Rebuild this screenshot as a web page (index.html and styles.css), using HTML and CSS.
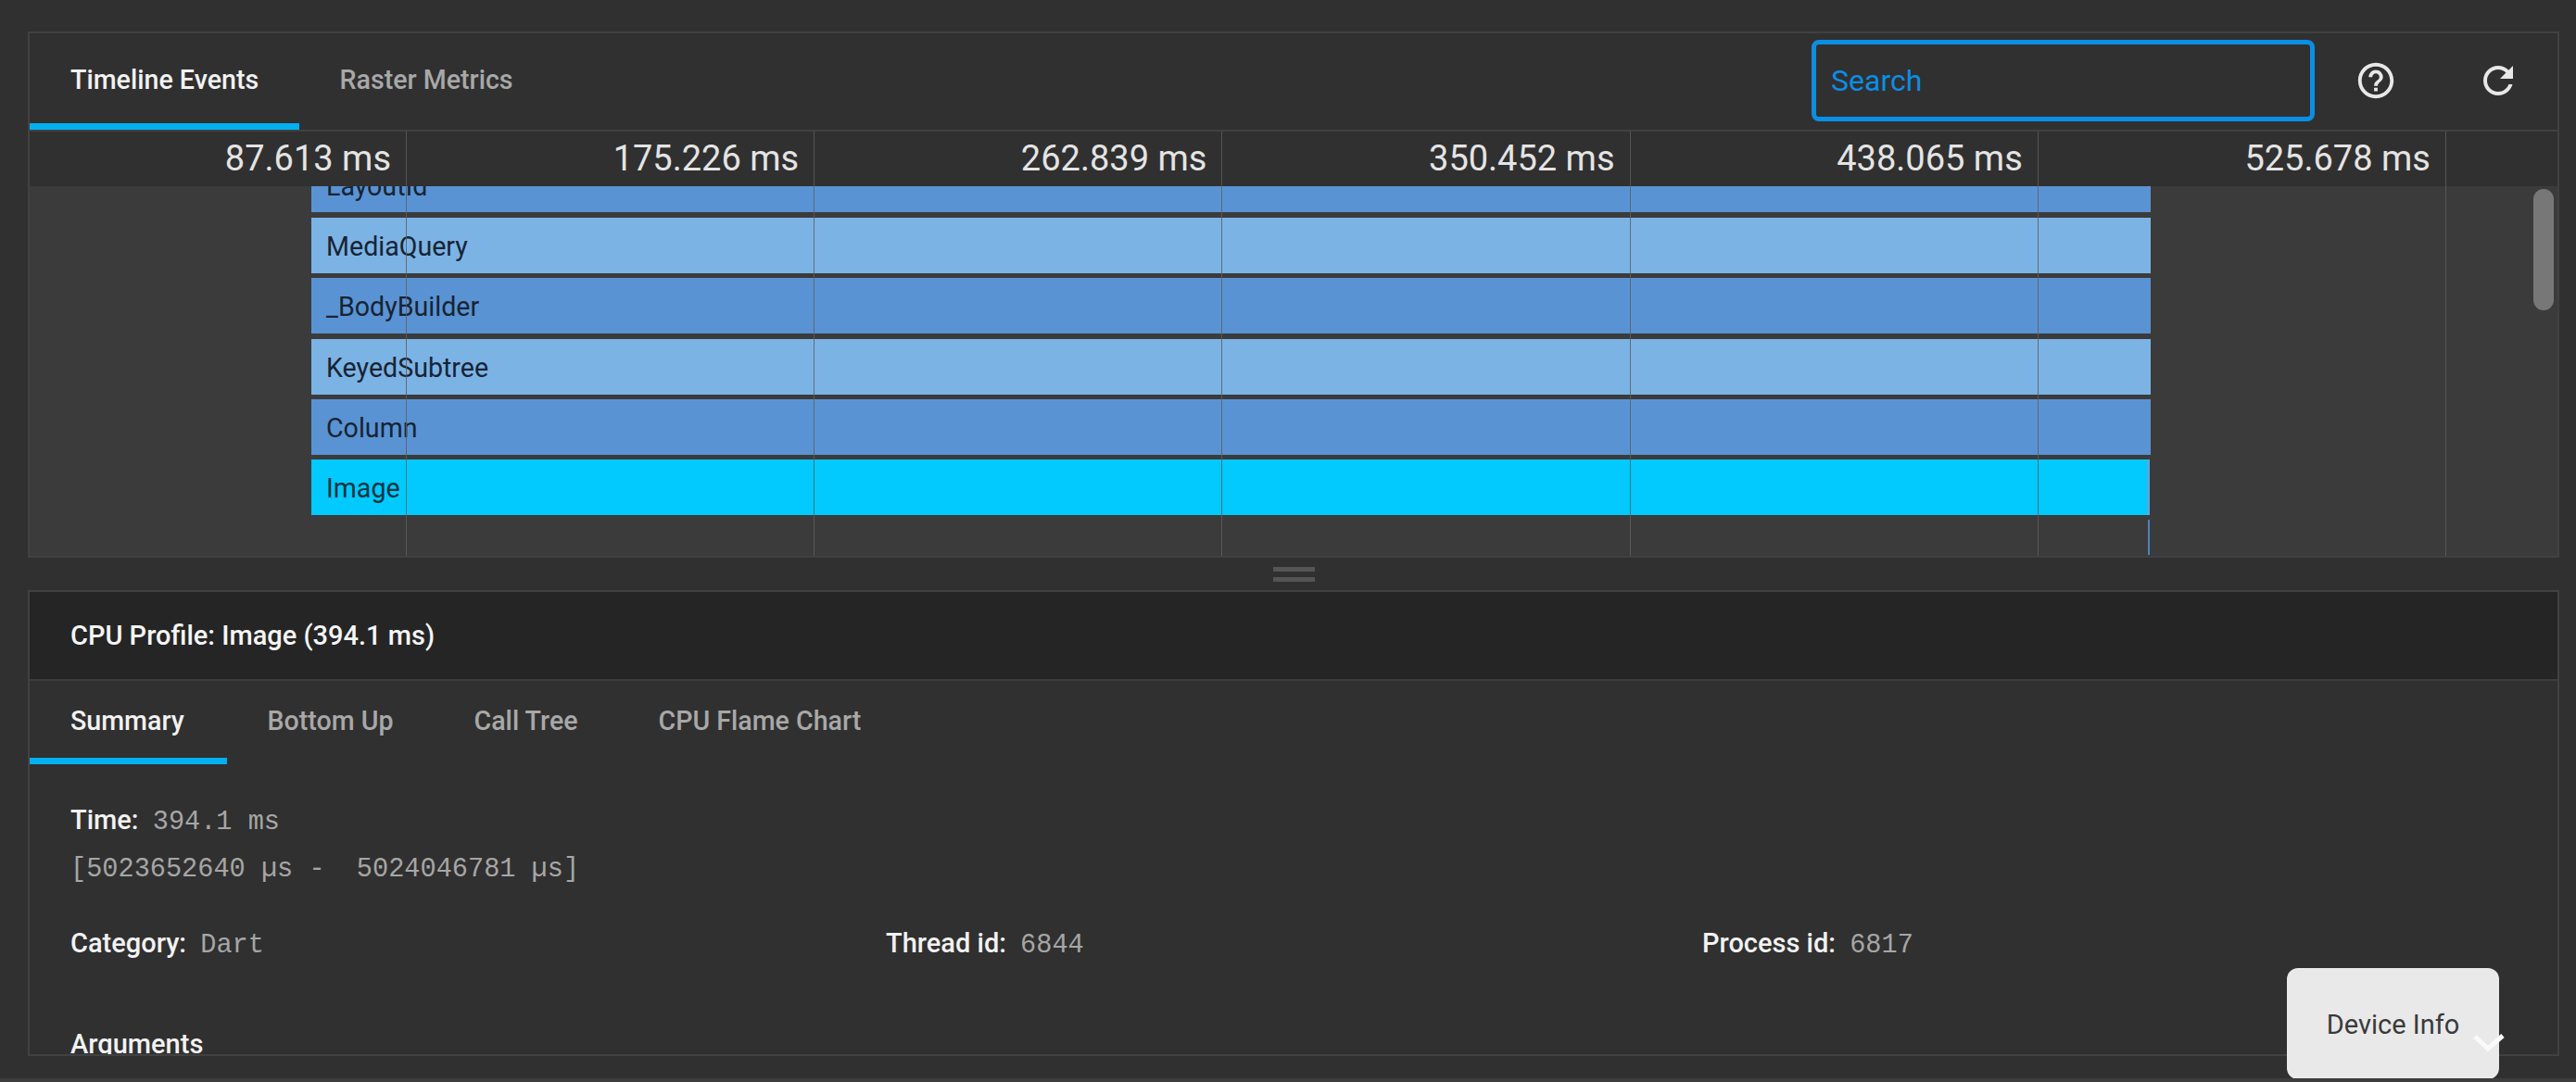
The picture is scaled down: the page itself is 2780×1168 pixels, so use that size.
FILE: index.html
```html
<!DOCTYPE html>
<html>
  <head>
    <link rel="stylesheet" href="styles.css">
    <title>Timeline Events</title>
  </head>
  <body>
    <div class="panel timeline-panel">
      <div class="toolbar">
        <div class="tab-bar">
          <div class="tab tab-active tab-timeline">Timeline Events</div>
          <div class="tab tab-raster">Raster Metrics</div>
        </div>
        <div class="search-box">Search</div>
        <div class="icon-btn icon-help">
          <svg width="46" height="46" viewBox="0 0 24 24"><path fill="#e8e8e8" d="M11 18h2v-2h-2v2zm1-16C6.48 2 2 6.48 2 12s4.48 10 10 10 10-4.48 10-10S17.52 2 12 2zm0 18c-4.41 0-8-3.59-8-8s3.59-8 8-8 8 3.59 8 8-3.59 8-8 8zm0-14c-2.21 0-4 1.79-4 4h2c0-1.1.9-2 2-2s2 .9 2 2c0 2-3 1.75-3 5h2c0-2.25 3-2.5 3-5 0-2.21-1.79-4-4-4z"/></svg>
        </div>
        <div class="icon-btn icon-refresh">
          <svg width="48" height="48" viewBox="0 0 24 24"><path fill="#e8e8e8" d="M17.65 6.35C16.2 4.9 14.21 4 12 4c-4.42 0-7.99 3.58-7.99 8s3.57 8 7.99 8c3.73 0 6.84-2.55 7.73-6h-2.08c-.82 2.33-3.04 4-5.65 4-3.31 0-6-2.69-6-6s2.69-6 6-6c1.66 0 3.14.69 4.22 1.78L13 11h7V4l-2.35 2.35z"/></svg>
        </div>
      </div>
      <div class="ruler">
        <div class="ruler-cell">87.613 ms</div>
        <div class="ruler-cell">175.226 ms</div>
        <div class="ruler-cell">262.839 ms</div>
        <div class="ruler-cell">350.452 ms</div>
        <div class="ruler-cell">438.065 ms</div>
        <div class="ruler-cell">525.678 ms</div>
      </div>
      <div class="chart">
        <div class="bar bar-dark bar-first"><span>LayoutId</span></div>
        <div class="bar bar-light"><span>MediaQuery</span></div>
        <div class="bar bar-dark"><span>_BodyBuilder</span></div>
        <div class="bar bar-light"><span>KeyedSubtree</span></div>
        <div class="bar bar-dark"><span>Column</span></div>
        <div class="bar bar-selected"><span>Image</span></div>
        <div class="bar-tail"></div>
        <div class="grid-lines">
          <div class="grid-line"></div>
          <div class="grid-line"></div>
          <div class="grid-line"></div>
          <div class="grid-line"></div>
          <div class="grid-line"></div>
          <div class="grid-line"></div>
        </div>
        <div class="scroll-thumb"></div>
      </div>
    </div>

    <div class="drag-handle"><span></span><span></span></div>

    <div class="panel details-panel">
      <div class="details-title">CPU Profile: Image (394.1 ms)</div>
      <div class="tab-bar details-tabs">
        <div class="tab tab-active tab-summary">Summary</div>
        <div class="tab tab-bottom">Bottom Up</div>
        <div class="tab tab-call">Call Tree</div>
        <div class="tab tab-flame">CPU Flame Chart</div>
      </div>
      <div class="summary">
        <div class="summary-line"><b>Time:</b> <span class="mono">394.1 ms</span></div>
        <div class="summary-line range"><span class="mono">[5023652640 µs -&nbsp; 5024046781 µs]</span></div>
        <div class="summary-row">
          <div class="summary-line col-category"><b>Category:</b> <span class="mono">Dart</span></div>
          <div class="summary-line col-thread"><b>Thread id:</b> <span class="mono">6844</span></div>
          <div class="summary-line"><b>Process id:</b> <span class="mono">6817</span></div>
        </div>
        <div class="summary-line arguments"><b>Arguments</b></div>
      </div>
    </div>

    <div class="device-info">
      Device Info
      <svg class="device-chevron" width="36" height="22" viewBox="0 0 36 22"><path fill="none" stroke="#fafafa" stroke-width="5" d="M3 4l14 13L33 3"/></svg>
    </div>
  </body>
</html>
```

FILE: styles.css
```css
* {
  box-sizing: border-box;
}
html,
body {
  height: 100%;
}
body {
  margin: 0;
  padding: 34px 18px 0 30px;
  background-color: #303030;
  border-bottom: 4px solid #3d3d3d;
  font-family: Roboto, "Liberation Sans", sans-serif;
  color: #fff;
  overflow: hidden;
  position: relative;
}

.panel {
  border: 2px solid #414141;
}
.timeline-panel {
  height: 568px;
}

/* tabs */
.toolbar {
  display: flex;
  align-items: center;
  height: 106px;
  border-bottom: 2px solid #414141;
}
.tab-bar {
  display: flex;
  flex: 1;
  align-self: stretch;
}
.tab {
  display: flex;
  align-items: center;
  height: 100%;
  padding: 3px 43.5px 0;
  font-size: 28.6px;
  font-weight: 500;
  color: #a8a8a8;
  border-bottom: 7px solid transparent;
  white-space: nowrap;
}
.tab-active {
  color: #f2f2f2;
  border-bottom-color: #02b0ef;
}
.tab-timeline {
  width: 291px;
  padding-left: 44px;
}

/* toolbar right side */
.search-box {
  width: 543px;
  height: 88px;
  margin-top: -2px;
  padding-left: 16px;
  display: flex;
  align-items: center;
  font-size: 32px;
  color: #0a8fe6;
  border: 5px solid #0a8fe6;
  border-radius: 8px;
}
.icon-btn {
  display: flex;
  align-items: center;
  justify-content: center;
  margin-top: -2px;
}
.icon-help {
  margin-left: 43px;
}
.icon-refresh {
  margin-left: 85px;
  margin-right: 40px;
}

/* time ruler */
.ruler {
  display: flex;
  height: 59px;
  position: relative;
}
.ruler-cell {
  width: 440.2px;
  flex-shrink: 0;
  text-align: right;
  padding-right: 16px;
  font-size: 38px;
  line-height: 58px;
  color: #e4e4e4;
  border-right: 1px solid #555;
  white-space: nowrap;
}
.ruler-cell:first-child {
  width: 407px;
}

/* flame chart */
.chart {
  position: relative;
  height: 399px;
  padding-left: 304px;
  background-color: #3b3b3b;
  overflow: hidden;
}
.bar {
  width: 1985px;
  height: 60px;
  margin-bottom: 5.3px;
  padding-left: 16px;
  font-size: 28.6px;
  line-height: 62px;
  color: #172434;
  white-space: nowrap;
}
.bar-first {
  height: 28px;
  margin-bottom: 6px;
  line-height: 0;
}
.bar-dark {
  background-color: #5a93d3;
}
.bar-light {
  background-color: #7cb3e5;
}
.bar-selected {
  width: 1984px;
  background-color: #02c9fe;
  border-right: 3px solid #5aa8dd;
  color: #05333f;
}
.bar-tail {
  width: 2px;
  height: 38px;
  margin-left: 1982px;
  background-color: #4f82bd;
}
.grid-lines {
  position: absolute;
  top: 0;
  bottom: 0;
  left: 406px;
  display: flex;
}
.grid-line {
  width: 440.2px;
  flex-shrink: 0;
  border-left: 1px solid rgba(95, 95, 95, 0.85);
}
.scroll-thumb {
  position: absolute;
  top: 3px;
  right: 4px;
  width: 22px;
  height: 131px;
  border-radius: 11px;
  background-color: #777;
}

/* splitter */
.drag-handle {
  height: 35px;
  display: flex;
  flex-direction: column;
  align-items: center;
  justify-content: center;
  gap: 6px;
}
.drag-handle span {
  width: 45px;
  height: 5px;
  background-color: #555;
}

/* details */
.details-panel {
  height: 503px;
  overflow: hidden;
}
.details-title {
  height: 96px;
  padding-left: 44px;
  font-size: 29px;
  font-weight: 500;
  line-height: 94px;
  color: #f5f5f5;
  background-color: #252525;
  border-bottom: 2px solid #3d3d3d;
}
.details-tabs {
  height: 90px;
}
.tab-summary {
  width: 213px;
  padding-left: 44px;
}
.summary {
  padding: 40px 0 0 44px;
  font-size: 29px;
}
.summary-line {
  line-height: 40px;
  white-space: nowrap;
  color: #f2f2f2;
}
.summary-line b {
  font-weight: 500;
}
.mono {
  font-family: "Liberation Mono", monospace;
  font-size: 28.6px;
  color: #a6a6a6;
  margin-left: 8px;
}
.range {
  margin-top: 8px;
}
.range .mono {
  margin-left: 0;
}
.summary-row {
  display: flex;
  margin-top: 39px;
}
.col-category {
  width: 880px;
}
.col-thread {
  width: 881px;
}
.arguments {
  margin-top: 66px;
}

/* floating card */
.device-info {
  position: absolute;
  left: 2468px;
  top: 1045px;
  width: 229px;
  height: 120px;
  display: flex;
  align-items: center;
  justify-content: center;
  padding-top: 2px;
  border-radius: 12px;
  background-color: #e9e9e9;
  color: #3a3a3a;
  font-size: 29px;
}
.device-chevron {
  position: absolute;
  left: 200px;
  top: 70px;
}
```
